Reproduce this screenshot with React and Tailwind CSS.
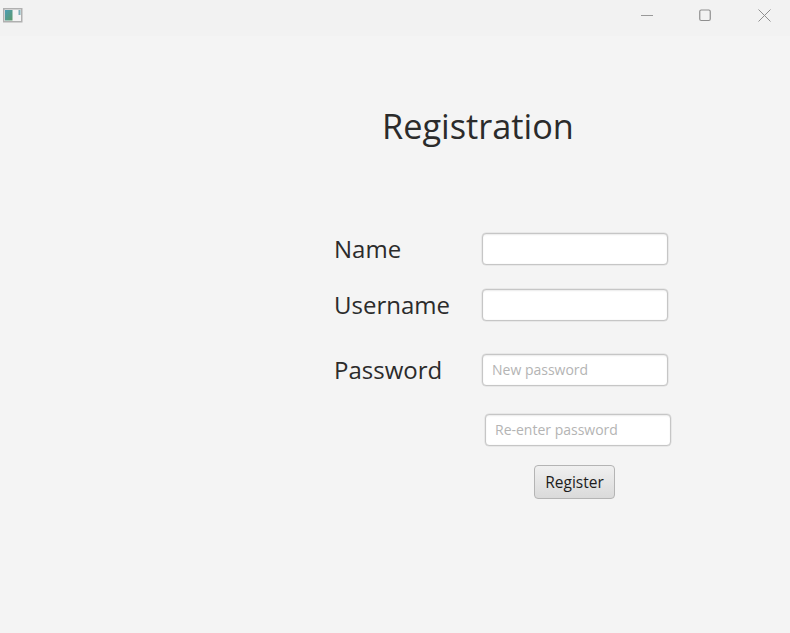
import React from 'react';

const fieldClass =
  'block w-[186px] h-[32px] rounded-[4px] border border-[#c6c6c6] bg-white px-[9px] pb-[2px] text-[14px] text-[#333] outline-none shadow-[0_0_0_0.5px_#dcdcdc,inset_0_0_1px_#d8d8d8,inset_0_2px_2px_-1px_#eeeeee] placeholder:text-[#b4b4b4]';

function Row({ label, className, children }) {
  return (
    <div className={`flex items-center ${className}`}>
      <span className="w-[148px] text-[24px] leading-[32px] text-[#2b2b2b]">{label}</span>
      {children}
    </div>
  );
}

export default function App() {
  return (
    <div className="h-[633px] w-[790px] overflow-hidden bg-[#f4f4f4] font-['Open_Sans','Noto_Sans',sans-serif]">
      {/* Title bar */}
      <div className="flex h-[36px] items-start justify-between bg-[#f2f2f2]">
        <svg className="ml-[3px] mt-[8px]" width="20" height="16" viewBox="0 0 20 16">
          <defs>
            <linearGradient id="ico" x1="0" y1="0" x2="1" y2="1">
              <stop offset="0" stopColor="#4d9db5" />
              <stop offset="1" stopColor="#5a9a6a" />
            </linearGradient>
          </defs>
          <rect x="0.75" y="0.75" width="18" height="13" fill="#f4f4f4" stroke="#b0b0b0" strokeWidth="1.5" />
          <rect x="2" y="2" width="7.5" height="10.5" fill="url(#ico)" />
          <rect x="15.5" y="2" width="2" height="5" fill="#7fb0b8" />
        </svg>
        <div className="flex">
          <svg className="mr-[45px] mt-[8px]" width="14" height="14" viewBox="0 0 14 14">
            <path d="M1 7.5H13" stroke="#999" strokeWidth="1" />
          </svg>
          <svg className="mr-[47px] mt-[9px]" width="12" height="13" viewBox="0 0 12 13">
            <rect x="0.75" y="1" width="10.5" height="10.5" rx="1.5" fill="none" stroke="#8f8f8f" strokeWidth="1.2" />
          </svg>
          <svg className="mr-[19px] mt-[9px]" width="13" height="13" viewBox="0 0 13 13">
            <path d="M0.5 0.5L12.5 12.5M12.5 0.5L0.5 12.5" stroke="#8f8f8f" strokeWidth="1" />
          </svg>
        </div>
      </div>

      {/* Heading */}
      <h1 className="mt-[66px] pl-[382px] text-[34.3px] leading-[48px] font-normal text-[#2b2b2b]">Registration</h1>

      {/* Form */}
      <div className="mt-[83px] pl-[334px]">
        <Row label="Name">
          <input className={fieldClass} />
        </Row>
        <Row label="Username" className="mt-[24px]">
          <input className={fieldClass} />
        </Row>
        <Row label="Password" className="mt-[33px]">
          <input className={fieldClass} placeholder="New password" />
        </Row>
        <div className="mt-[28px] pl-[151px]">
          <input className={fieldClass} placeholder="Re-enter password" />
        </div>
        <div className="mt-[19px] pl-[200px]">
          <button className="h-[34px] w-[81px] rounded-[4px] border border-[#b4b4b4] bg-gradient-to-b from-[#f0f0f0] to-[#dadada] pt-[1px] text-[15.5px] text-[#1c1c1c]">
            Register
          </button>
        </div>
      </div>
    </div>
  );
}
